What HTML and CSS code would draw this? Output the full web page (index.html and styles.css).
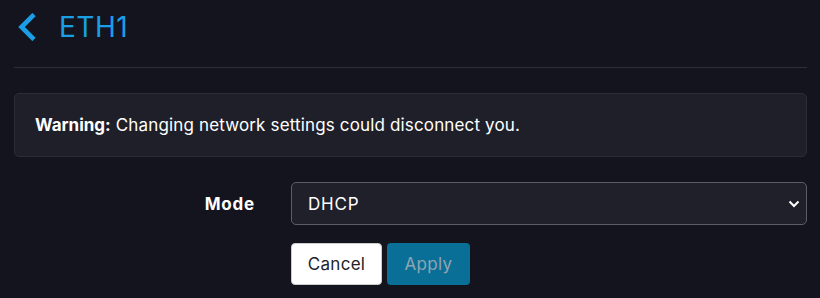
FILE: index.html
```html
<!DOCTYPE html>
<html>
<head>
<meta charset="utf-8">
<link rel="stylesheet" href="styles.css">
</head>
<body>
<div class="page">
  <header class="header">
    <span class="back">
      <svg width="22" height="28" viewBox="0 0 22 28"><path d="M19 1.5 L6.5 14 L19 26.5" fill="none" stroke="#1a9ee6" stroke-width="4.6" stroke-linecap="butt"/></svg>
    </span>
    <h1 class="title">ETH1</h1>
  </header>
  <div class="divider"></div>
  <div class="alert"><strong>Warning:</strong> Changing network settings could disconnect you.</div>
  <div class="form">
    <label class="label">Mode</label>
    <div class="select">
      <span>DHCP</span>
      <svg width="12" height="8" viewBox="0 0 12 8"><path d="M1.5 1.5 L6 6 L10.5 1.5" fill="none" stroke="#fff" stroke-width="2"/></svg>
    </div>
    <div></div>
    <div class="buttons">
      <button class="btn cancel">Cancel</button>
      <button class="btn apply">Apply</button>
    </div>
  </div>
</div>
</body>
</html>
```
FILE: styles.css
```css
html, body {
  margin: 0;
  background: #14141f;
  font-family: Inter, "Noto Sans", sans-serif;
  color: #ffffff;
}
.page {
  padding: 0 13px 0 14px;
}
.header {
  display: flex;
  align-items: center;
  height: 54px;
  padding-left: 1px;
}
.back {
  display: flex;
  width: 44px;
}
.title {
  margin: 0;
  font-size: 28px;
  font-weight: 400;
  color: #1a9ee6;
  letter-spacing: 0.5px;
}
.divider {
  height: 1px;
  background: #2e2e3a;
  margin-top: 13px;
}
.alert {
  margin-top: 25px;
  height: 64px;
  box-sizing: border-box;
  padding: 0 20px;
  display: flex;
  align-items: center;
  gap: 5px;
  background: #1f1f2a;
  border: 1px solid #2c2c37;
  border-radius: 5px;
  font-size: 17px;
  letter-spacing: 0.15px;
}
.alert strong { font-weight: 700; letter-spacing: 0; }
.form {
  margin-top: 25px;
  display: grid;
  grid-template-columns: 277px 1fr;
  row-gap: 18px;
}
.label {
  text-align: right;
  padding-right: 36px;
  font-weight: 700;
  font-size: 17px;
  letter-spacing: 0.8px;
  align-self: center;
}
.select {
  height: 43px;
  box-sizing: border-box;
  border: 1px solid #5d5d6a;
  border-radius: 5px;
  background: #20202b;
  display: flex;
  align-items: center;
  justify-content: space-between;
  padding: 0 6px 0 16px;
  font-size: 17px;
  letter-spacing: 0.8px;
}
.buttons {
  display: flex;
  gap: 5px;
}
.btn {
  height: 42px;
  font-family: inherit;
  font-size: 17px;
  letter-spacing: 0.3px;
  border-radius: 4px;
  border: 1px solid transparent;
  padding: 0;
}
.cancel {
  background: #ffffff;
  color: #22222a;
  border-color: #cccccc;
  width: 91px;
}
.apply {
  background: #0a6f97;
  color: #8fa5b3;
  width: 83px;
}
```
